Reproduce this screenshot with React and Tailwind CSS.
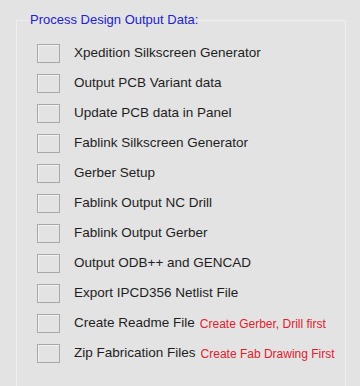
import React from "react";

const steps = [
  { label: "Xpedition Silkscreen Generator" },
  { label: "Output PCB Variant data" },
  { label: "Update PCB data in Panel" },
  { label: "Fablink Silkscreen Generator" },
  { label: "Gerber Setup" },
  { label: "Fablink Output NC Drill" },
  { label: "Fablink Output Gerber" },
  { label: "Output ODB++ and GENCAD" },
  { label: "Export IPCD356 Netlist File" },
  { label: "Create Readme File", note: "Create Gerber, Drill first" },
  { label: "Zip Fabrication Files", note: "Create Fab Drawing First" },
];

export default function App() {
  return (
    <div
      className="w-[360px] h-[386px] bg-[#e3e3e3] overflow-hidden pt-[12px] pl-[16px]"
      style={{ fontFamily: '"Liberation Sans", Arial, sans-serif' }}
    >
      <fieldset className="w-[330px] h-[400px] border border-[#efefef] m-0 pl-[20px] pt-[10px]">
        <legend className="-ml-[8px] px-[1px] text-[13px] leading-[16px] text-[#2222cc]">
          Process Design Output Data:
        </legend>
        <div className="flex flex-col">
          {steps.map((s) => (
            <div key={s.label} className="flex items-center h-[30px]">
              <div className="w-[23px] h-[19px] border border-[#a8a8a8] shadow-[inset_1px_1px_0_#f2f2f2] bg-[#e3e3e3] shrink-0" />
              <span className="ml-[14px] text-[13.5px] text-[#1e1e1e] whitespace-nowrap">
                {s.label}
              </span>
              {s.note && (
                <span className="ml-[5px] text-[12px] text-[#e0202c] whitespace-nowrap mt-[2px]">
                  {s.note}
                </span>
              )}
            </div>
          ))}
        </div>
      </fieldset>
    </div>
  );
}
